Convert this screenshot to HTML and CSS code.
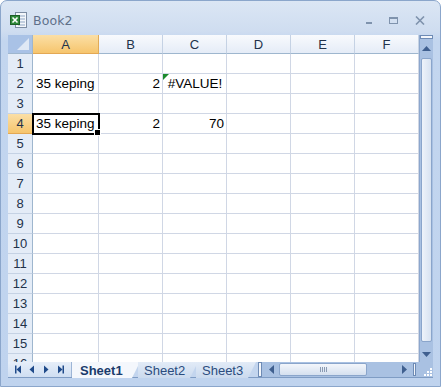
FILE: index.html
```html
<!DOCTYPE html>
<html>
<head>
<meta charset="utf-8">
<link rel="stylesheet" href="styles.css">
</head>
<body>
<div class="window">
  <div class="titlebar">
    <svg class="appicon" width="18" height="18" viewBox="0 0 18 18">
      <rect x="5.5" y="1.5" width="11" height="15" fill="#f4f7fb" stroke="#7d8da3"/>
      <line x1="8" y1="5" x2="15" y2="5" stroke="#8fa6c4"/>
      <line x1="8" y1="8" x2="15" y2="8" stroke="#8fa6c4"/>
      <line x1="8" y1="11" x2="15" y2="11" stroke="#8fa6c4"/>
      <line x1="8" y1="14" x2="15" y2="14" stroke="#8fa6c4"/>
      <rect x="0.5" y="4.5" width="9" height="9" fill="#2f8a3a" stroke="#1d5e26"/>
      <path d="M2.5 6.5 L7.5 11.5 M7.5 6.5 L2.5 11.5" stroke="#ffffff" stroke-width="1.6"/>
    </svg>
    <span class="title">Book2</span>
    <div class="controls">
      <span class="ctl min"></span>
      <span class="ctl max"></span>
      <svg class="ctl close" width="10" height="9" viewBox="0 0 10 9"><path d="M1 0.5 L9 8.5 M9 0.5 L1 8.5" stroke="#7f93ad" stroke-width="1.6"/></svg>
    </div>
  </div>
  <div class="body">
    <div class="main">
      <div class="grid">
        <div class="hd corner"></div>
        <div class="hd col sel">A</div>
        <div class="hd col">B</div>
        <div class="hd col">C</div>
        <div class="hd col">D</div>
        <div class="hd col">E</div>
        <div class="hd col">F</div>

        <div class="rh">1</div><div class="c"></div><div class="c"></div><div class="c"></div><div class="c"></div><div class="c"></div><div class="c"></div>
        <div class="rh">2</div><div class="c">35 keping</div><div class="c num">2</div><div class="c err">#VALUE!</div><div class="c"></div><div class="c"></div><div class="c"></div>
        <div class="rh">3</div><div class="c"></div><div class="c"></div><div class="c"></div><div class="c"></div><div class="c"></div><div class="c"></div>
        <div class="rh sel">4</div><div class="c active">35 keping</div><div class="c num">2</div><div class="c num">70</div><div class="c"></div><div class="c"></div><div class="c"></div>
        <div class="rh">5</div><div class="c"></div><div class="c"></div><div class="c"></div><div class="c"></div><div class="c"></div><div class="c"></div>
        <div class="rh">6</div><div class="c"></div><div class="c"></div><div class="c"></div><div class="c"></div><div class="c"></div><div class="c"></div>
        <div class="rh">7</div><div class="c"></div><div class="c"></div><div class="c"></div><div class="c"></div><div class="c"></div><div class="c"></div>
        <div class="rh">8</div><div class="c"></div><div class="c"></div><div class="c"></div><div class="c"></div><div class="c"></div><div class="c"></div>
        <div class="rh">9</div><div class="c"></div><div class="c"></div><div class="c"></div><div class="c"></div><div class="c"></div><div class="c"></div>
        <div class="rh">10</div><div class="c"></div><div class="c"></div><div class="c"></div><div class="c"></div><div class="c"></div><div class="c"></div>
        <div class="rh">11</div><div class="c"></div><div class="c"></div><div class="c"></div><div class="c"></div><div class="c"></div><div class="c"></div>
        <div class="rh">12</div><div class="c"></div><div class="c"></div><div class="c"></div><div class="c"></div><div class="c"></div><div class="c"></div>
        <div class="rh">13</div><div class="c"></div><div class="c"></div><div class="c"></div><div class="c"></div><div class="c"></div><div class="c"></div>
        <div class="rh">14</div><div class="c"></div><div class="c"></div><div class="c"></div><div class="c"></div><div class="c"></div><div class="c"></div>
        <div class="rh">15</div><div class="c"></div><div class="c"></div><div class="c"></div><div class="c"></div><div class="c"></div><div class="c"></div>
        <div class="rh">16</div><div class="c"></div><div class="c"></div><div class="c"></div><div class="c"></div><div class="c"></div><div class="c"></div>
      </div>
      <div class="vscroll">
        <div class="vsplit"></div>
        <div class="varrow up"><svg width="9" height="5" viewBox="0 0 9 5"><path d="M0 5 L4.5 0 L9 5 Z" fill="#3f5f8f"/></svg></div>
        <div class="vthumb"></div>
        <div class="varrow down"><svg width="9" height="5" viewBox="0 0 9 5"><path d="M0 0 L4.5 5 L9 0 Z" fill="#3f5f8f"/></svg></div>
      </div>
    </div>
    <div class="tabbar">
      <div class="nav">
        <svg width="58" height="9" viewBox="0 0 58 9">
          <rect x="3" y="0.5" width="1.5" height="8" fill="#1f4a8a"/>
          <path d="M9 0.5 L4.5 4.5 L9 8.5 Z" fill="#1f4a8a"/>
          <path d="M22 0.5 L17.5 4.5 L22 8.5 Z" fill="#1f4a8a"/>
          <path d="M32 0.5 L36.5 4.5 L32 8.5 Z" fill="#1f4a8a"/>
          <path d="M46 0.5 L50.5 4.5 L46 8.5 Z" fill="#1f4a8a"/>
          <rect x="50.5" y="0.5" width="1.5" height="8" fill="#1f4a8a"/>
        </svg>
      </div>
      <div class="tabs">
        <div class="tab active"><span>Sheet1</span></div>
        <div class="tab"><span>Sheet2</span></div>
        <div class="tab"><span>Sheet3</span></div>
      </div>
      <div class="hsplit"></div>
      <div class="hscroll">
        <svg class="harrow" width="5" height="9" viewBox="0 0 5 9"><path d="M5 0 L0 4.5 L5 9 Z" fill="#3f5f8f"/></svg>
        <div class="hthumb"><span class="grip"></span></div>
        <svg class="harrow right" width="5" height="9" viewBox="0 0 5 9"><path d="M0 0 L5 4.5 L0 9 Z" fill="#3f5f8f"/></svg>
        <div class="hsplit2"></div>
      </div>
      <div class="sizegrip">
        <svg width="9" height="9" viewBox="0 0 9 9">
          <rect x="7" y="1" width="2" height="2" fill="#ffffff"/>
          <rect x="4" y="4" width="2" height="2" fill="#ffffff"/>
          <rect x="7" y="4" width="2" height="2" fill="#ffffff"/>
          <rect x="1" y="7" width="2" height="2" fill="#ffffff"/>
          <rect x="4" y="7" width="2" height="2" fill="#ffffff"/>
          <rect x="7" y="7" width="2" height="2" fill="#ffffff"/>
        </svg>
      </div>
    </div>
  </div>
</div>
</body>
</html>
```

FILE: styles.css
```css
* { box-sizing: border-box; }
html, body { margin: 0; padding: 0; background: #ffffff; }
body { width: 441px; height: 387px; overflow: hidden; font-family: "Liberation Sans", Arial, sans-serif; }

.window {
  width: 441px;
  height: 387px;
  border: 1px solid #8ba6cb;
  border-radius: 7px 7px 0 0;
  background: linear-gradient(#dbe6f4 0px, #cfddf0 30px, #c3d6ef 40px, #bfd3ee 100%);
  display: flex;
  flex-direction: column;
  overflow: hidden;
}

.titlebar {
  height: 34px;
  flex: none;
  display: flex;
  align-items: center;
  padding: 4px 0 0 9px;
}
.appicon { flex: none; }
.title {
  margin-left: 5px;
  font-family: "DejaVu Sans", sans-serif;
  font-size: 12.5px;
  color: #5f708a;
  letter-spacing: 0.1px;
}
.controls {
  margin-left: auto;
  display: flex;
  align-items: center;
  gap: 0;
  padding-right: 15px;
}
.ctl { display: block; }
.min { width: 6px; height: 2px; background: #7f93ad; margin-right: 17px; margin-top: 5px; }
.max { width: 9px; height: 7px; border: 1px solid #7f93ad; border-top-width: 2px; margin-right: 17px; }

.body {
  flex: 1;
  display: flex;
  flex-direction: column;
  padding: 0 7px 8px 7px;
}
.main {
  height: 327px;
  display: flex;
  flex: none;
}
.grid {
  width: 411px;
  height: 327px;
  overflow: hidden;
  background: #ffffff;
  display: grid;
  grid-template-columns: 25px 66px 64px 64px 64px 64px 64px;
  grid-template-rows: 19px repeat(16, 20px);
  font-size: 13.5px;
  color: #000;
}
.hd {
  background: linear-gradient(#f8fafd, #e5ecf7);
  border-right: 1px solid #c5d2e4;
  border-bottom: 1px solid #9eb6ce;
  display: flex;
  align-items: center;
  justify-content: center;
  color: #22324a;
  font-size: 13px;
}
.hd.sel { background: linear-gradient(#fbdfa6, #f6c56d); border-right-color: #e1ab58; border-bottom-color: #e3a854; }
.corner {
  background: #a9c2e6;
  border-right: 1px solid #9eb6ce;
  position: relative;
}
.corner::after {
  content: "";
  position: absolute;
  right: 3px;
  bottom: 3px;
  width: 0; height: 0;
  border-left: 12px solid transparent;
  border-bottom: 12px solid #dfe8f5;
}
.rh {
  background: #e4ecf7;
  border-right: 1px solid #9eb6ce;
  border-bottom: 1px solid #c5d2e4;
  display: flex;
  align-items: center;
  justify-content: center;
  color: #22324a;
  font-size: 13px;
}
.rh.sel { background: linear-gradient(#fbdfa6, #f6c56d); border-right-color: #e1ab58; border-bottom-color: #e3a854; }
.c {
  border-right: 1px solid #d0d7e5;
  border-bottom: 1px solid #d0d7e5;
  display: flex;
  align-items: center;
  padding: 0 2px 0 3px;
  white-space: nowrap;
  position: relative;
}
.c.num { justify-content: flex-end; }
.c.err { justify-content: center; }
.c.err::before {
  content: "";
  position: absolute;
  left: 0; top: 0;
  width: 0; height: 0;
  border-top: 6px solid #1b8a2c;
  border-right: 6px solid transparent;
}
.c.active {
  outline: 2px solid #000;
  outline-offset: -1px;
  z-index: 1;
}
.c.active::after {
  content: "";
  position: absolute;
  right: -3px;
  bottom: -3px;
  width: 5px;
  height: 5px;
  background: #000;
  border: 1px solid #fff;
}

.vscroll {
  width: 14px;
  height: 327px;
  display: flex;
  flex-direction: column;
  background: #a9c1e2;
  border-left: 1px solid #8ca7cd;
}
.vsplit { height: 4px; background: #f3f6fb; border: 1px solid #6e8bb5; flex: none; }
.varrow { height: 18px; display: flex; align-items: center; justify-content: center; flex: none; }
.vthumb {
  flex: 1;
  margin: 1px 1px 4px 1px;
  background: linear-gradient(90deg, #eef3fa, #d7e2f1);
  border: 1px solid #8aa5cb;
  border-radius: 2px;
}
.varrow.down { height: 16px; }

.tabbar {
  height: 16px;
  flex: none;
  display: flex;
  align-items: stretch;
  background: #c3d5ee;
  border-bottom: 1px solid #7f9cc4;
}
.nav {
  width: 64px;
  flex: none;
  display: flex;
  align-items: center;
  padding-left: 4px;
  background: linear-gradient(#e6eef9, #cfdef2);
  border-right: 1px solid #9db5d6;
}
.tabs { display: flex; align-items: stretch; flex: none; }
.tab {
  height: 16px;
  display: flex;
  align-items: center;
  padding: 0 8px 0 6px;
  font-size: 13px;
  color: #2b4c7e;
  background: linear-gradient(#e2ebf7, #cbdaee);
  clip-path: polygon(0 0, 100% 0, calc(100% - 8px) 100%, 0 100%);
  margin-right: -2px;
  width: 60px;
}
.tab.active {
  background: #f4f7fc;
  font-weight: bold;
  color: #1a3b6c;
  width: 68px;
  padding-left: 8px;
}
.tab span { white-space: nowrap; }
.hsplit {
  width: 4px;
  flex: none;
  margin-left: 4px;
  background: #f3f6fb;
  border: 1px solid #6e8bb5;
}
.hscroll {
  flex: 1;
  display: flex;
  align-items: center;
  background: #a9c1e2;
  padding-left: 7px;
}
.harrow { flex: none; }
.hthumb {
  width: 88px;
  height: 13px;
  margin-left: 5px;
  background: linear-gradient(#f3f6fb, #d5e0ef);
  border: 1px solid #8aa5cb;
  border-radius: 2px;
  display: flex;
  align-items: center;
  justify-content: center;
}
.grip {
  width: 7px;
  height: 5px;
  background: repeating-linear-gradient(90deg, #8a9bb3 0 1px, transparent 1px 2px);
}
.harrow.right { margin-left: auto; }
.hsplit2 {
  width: 3px;
  height: 13px;
  margin: 0 2px 0 6px;
  background: #f3f6fb;
  border: 1px solid #6e8bb5;
}
.sizegrip {
  width: 15px;
  flex: none;
  display: flex;
  align-items: flex-end;
  justify-content: flex-end;
  padding: 0 1px 1px 0;
  background: #a9c1e2;
}
```
